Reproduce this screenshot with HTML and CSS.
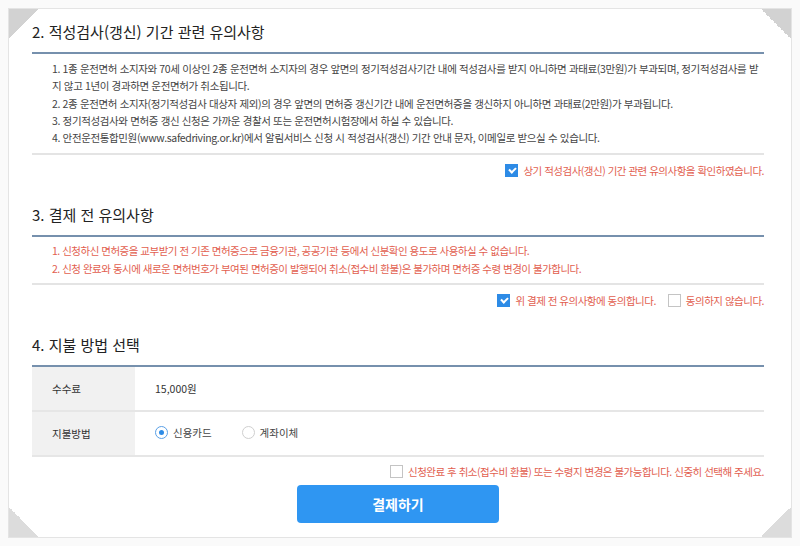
FILE: index.html
```html
<!DOCTYPE html>
<html lang="ko">
<head>
  <meta charset="UTF-8" />
  <meta name="viewport" content="width=device-width, initial-scale=1.0"/>
  <title>적성검사 신청 - 결제</title>
  <link rel="stylesheet" href="styles.css">
</head>
<body>

  <div class="card">

    <!-- 2. 적성검사 유의사항 -->
    <div class="section">
      <h2 class="section-title">2. 적성검사(갱신) 기간 관련 유의사항</h2>
      <ul class="notes">
        <li>1. 1종 운전면허 소지자와 70세 이상인 2종 운전면허 소지자의 경우 앞면의 정기적성검사기간 내에 적성검사를 받지 아니하면 과태료(3만원)가 부과되며, 정기적성검사를 받지 않고 1년이 경과하면 운전면허가 취소됩니다.</li>
        <li>2. 2종 운전면허 소지자(정기적성검사 대상자 제외)의 경우 앞면의 면허증 갱신기간 내에 운전면허증을 갱신하지 아니하면 과태료(2만원)가 부과됩니다.</li>
        <li>3. 정기적성검사와 면허증 갱신 신청은 가까운 경찰서 또는 운전면허시험장에서 하실 수 있습니다.</li>
        <li>4. 안전운전통합민원(www.safedriving.or.kr)에서 알림서비스 신청 시 적성검사(갱신) 기간 안내 문자, 이메일로 받으실 수 있습니다.</li>
      </ul>
      <div class="check-row">
        <label class="check"><span class="box checked"></span>상기 적성검사(갱신) 기간 관련 유의사항을 확인하였습니다.</label>
      </div>
    </div>

    <!-- 3. 결제 전 유의사항 -->
    <div class="section">
      <h2 class="section-title">3. 결제 전 유의사항</h2>
      <ul class="notes red">
        <li>1. 신청하신 면허증을 교부받기 전 기존 면허증으로 금융기관, 공공기관 등에서 신분확인 용도로 사용하실 수 없습니다.</li>
        <li>2. 신청 완료와 동시에 새로운 면허번호가 부여된 면허증이 발행되어 취소(접수비 환불)은 불가하며 면허증 수령 변경이 불가합니다.</li>
      </ul>
      <div class="check-row">
        <label class="check"><span class="box checked"></span>위 결제 전 유의사항에 동의합니다.</label>
        <label class="check"><span class="box"></span>동의하지 않습니다.</label>
      </div>
    </div>

    <!-- 4. 지불 방법 선택 -->
    <div class="section">
      <h2 class="section-title">4. 지불 방법 선택</h2>
      <table class="pay-table">
        <tr>
          <th>수수료</th>
          <td>15,000원</td>
        </tr>
        <tr>
          <th>지불방법</th>
          <td>
            <label class="radio"><span class="dot checked"></span>신용카드</label>
            <label class="radio"><span class="dot"></span>계좌이체</label>
          </td>
        </tr>
      </table>
      <div class="check-row agree">
        <label class="check"><span class="box"></span>신청완료 후 취소(접수비 환불) 또는 수령지 변경은 불가능합니다. 신중히 선택해 주세요.</label>
      </div>
      <div class="btn-wrap">
        <button class="pay-btn">결제하기</button>
      </div>
    </div>

  </div>

</body>
</html>
```

FILE: styles.css
```css
body {
  margin: 0;
  background: #fafafa;
  font-family: "Noto Sans CJK KR", "Liberation Sans", sans-serif;
  color: #333;
}

.card {
  margin: 8px;
  height: 530px;
  box-sizing: border-box;
  padding: 13px 27px 0 23px;
  background:
    linear-gradient(135deg, #d2d2d2 50%, transparent 50%) top left / 30px 30px no-repeat,
    linear-gradient(225deg, #d2d2d2 50%, transparent 50%) top right / 30px 30px no-repeat,
    linear-gradient(45deg, #dcdcdc 50%, transparent 50%) bottom left / 30px 30px no-repeat,
    linear-gradient(315deg, #dcdcdc 50%, transparent 50%) bottom right / 30px 30px no-repeat,
    #fff;
  border: 1px solid #e4e4e4;
}

.section + .section {
  margin-top: 19px;
}

.section-title {
  margin: 0;
  padding-bottom: 10px;
  font-size: 15px;
  line-height: 20px;
  font-weight: normal;
  color: #222;
  border-bottom: 2px solid #7690ad;
}

.notes {
  list-style: none;
  margin: 0;
  padding: 6px 0 7px 20px;
  font-size: 10.5px;
  line-height: 17.25px;
  letter-spacing: -0.37px;
  color: #444;
  border-bottom: 2px solid #e4e4e4;
}

.notes.red {
  padding-top: 5px;
  padding-bottom: 6px;
  line-height: 17.5px;
  letter-spacing: -0.5px;
  color: #e2604f;
}

.check-row {
  display: flex;
  justify-content: flex-end;
  align-items: center;
  gap: 12px;
  height: 31px;
}

.check {
  display: flex;
  align-items: center;
  font-size: 10.5px;
  letter-spacing: -0.5px;
  color: #e2604f;
}

.box {
  width: 13px;
  height: 13px;
  margin-right: 5px;
  box-sizing: border-box;
  border: 1px solid #c4c4c4;
  background: #fff;
  position: relative;
}

.box.checked {
  border-color: #2d8be6;
  background: #2d8be6;
}

.box.checked::after {
  content: "";
  position: absolute;
  left: 3px;
  top: 2px;
  width: 5px;
  height: 3px;
  border-left: 2px solid #fff;
  border-bottom: 2px solid #fff;
  transform: rotate(-45deg);
}

.pay-table {
  width: 100%;
  border-collapse: collapse;
  font-size: 10.5px;
  color: #333;
}

.pay-table th {
  width: 83px;
  background: #f1f1f1;
  font-weight: normal;
  text-align: left;
  padding: 0 0 0 20px;
  height: 43px;
  border-bottom: 2px solid #e6e6e6;
}

.pay-table td {
  padding: 0 0 0 20px;
  border-bottom: 2px solid #e6e6e6;
}

.radio {
  display: inline-flex;
  align-items: center;
  margin-right: 27px;
  color: #444;
}

.dot {
  width: 13px;
  height: 13px;
  margin-right: 5px;
  box-sizing: border-box;
  border: 1px solid #cfcfcf;
  border-radius: 50%;
  position: relative;
}

.dot.checked {
  border-color: #5aa0e6;
}

.dot.checked::after {
  content: "";
  position: absolute;
  left: 3px;
  top: 3px;
  width: 5px;
  height: 5px;
  border-radius: 50%;
  background: #2d8be6;
}

.check-row.agree {
  height: 28px;
}

.btn-wrap {
  display: flex;
  justify-content: center;
}

.pay-btn {
  width: 202px;
  height: 38px;
  border: none;
  border-radius: 4px;
  background: #2f96f2;
  color: #fff;
  font-family: inherit;
  font-size: 14px;
  font-weight: bold;
  cursor: pointer;
}
```
